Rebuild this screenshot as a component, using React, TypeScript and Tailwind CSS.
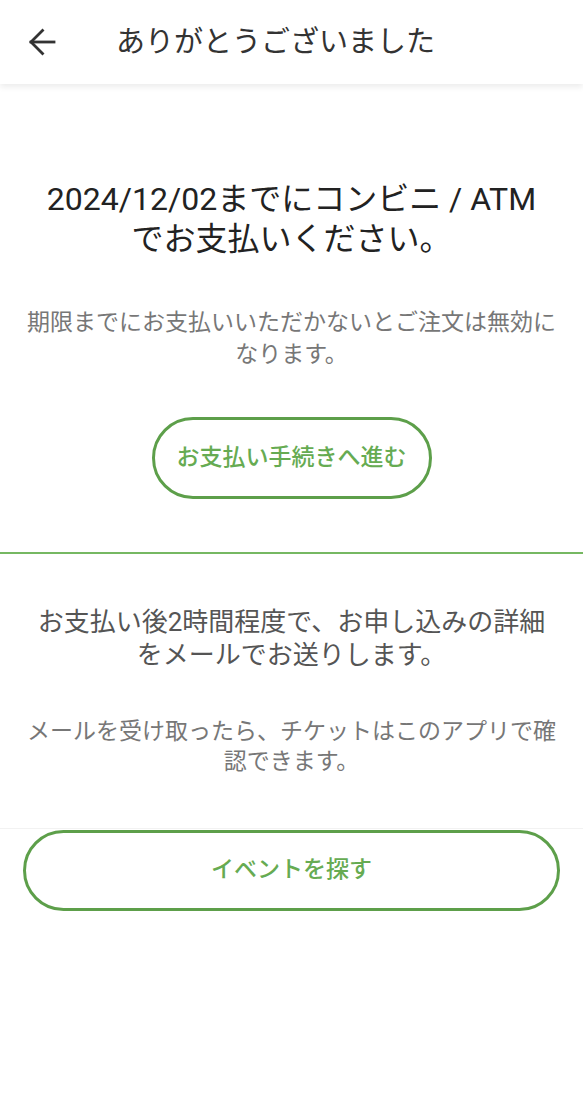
import React from "react";

const jp = { fontFamily: 'Roboto, "Noto Sans CJK JP", "Noto Sans", sans-serif' };

function BackArrow() {
  return (
    <svg width="28" height="28" viewBox="0 0 28 28" fill="none" stroke="#333" strokeWidth="2.8" strokeLinecap="square">
      <path d="M3 14H26" />
      <path d="M14.5 2.5L3 14L14.5 25.5" />
    </svg>
  );
}

export default function App() {
  return (
    <div className="min-h-[1099px] w-full bg-white flex flex-col" style={jp}>
      {/* header */}
      <div className="h-[84px] flex items-center bg-white shadow-[0_3px_6px_rgba(0,0,0,0.08)] relative z-10">
        <button className="ml-[28px] w-[28px] h-[28px] flex items-center justify-center">
          <BackArrow />
        </button>
        <h1 className="ml-[60px] text-[29px] leading-none text-[#333]">ありがとうございました</h1>
      </div>

      {/* payment notice */}
      <div className="flex flex-col items-center px-[16px] pt-[95px]">
        <h2 className="text-[32px] leading-[40px] text-[#222] text-center">
          2024/12/02までにコンビニ / ATM
          <br />
          でお支払いください。
        </h2>
        <p className="mt-[48px] text-[23px] leading-[32px] text-[#777] text-center">
          期限までにお支払いいただかないとご注文は無効になります。
        </p>
        <button className="mt-[46px] w-[280px] h-[82px] rounded-full border-[3px] border-[#5d9f4a] text-[#66ab52] text-[23px] font-medium">
          お支払い手続きへ進む
        </button>
      </div>

      <div className="mt-[53px] h-[2px] bg-[#76b862]" />

      {/* mail info */}
      <div className="flex flex-col items-center px-[20px] pt-[52px] pb-[51px]">
        <p className="text-[26px] leading-[33px] text-[#555] text-center">
          お支払い後2時間程度で、お申し込みの詳細
          <br />
          をメールでお送りします。
        </p>
        <p className="mt-[45px] text-[23px] leading-[30px] text-[#777] text-center">
          メールを受け取ったら、チケットはこのアプリで確認できます。
        </p>
      </div>

      {/* footer */}
      <div className="border-t border-[#f2f2f2] px-[23px] pt-[1px]">
        <button className="w-full h-[81px] rounded-full border-[3px] border-[#5d9f4a] text-[#66ab52] text-[23px] font-medium">
          イベントを探す
        </button>
      </div>
    </div>
  );
}
